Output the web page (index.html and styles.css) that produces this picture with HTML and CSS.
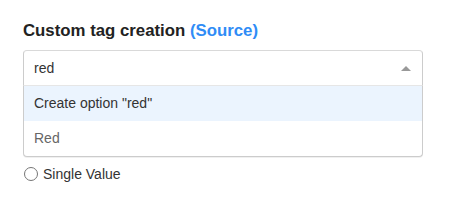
FILE: index.html
```html
<!DOCTYPE html>
<html lang="en">
<head>
    <meta charset="UTF-8">
    <title>Custom tag creation</title>
    <link rel="stylesheet" href="styles.css">
</head>
<body>
    <div class="section">
        <h3 class="section-heading">Custom tag creation <a href="#" class="source-link">(Source)</a></h3>

        <!-- Select (open) -->
        <div class="select is-open">
            <div class="select-control">
                <span class="select-value">red</span>
                <span class="select-arrow"></span>
            </div>
            <div class="select-menu">
                <div class="select-option is-focused">Create option "red"</div>
                <div class="select-option">Red</div>
            </div>
        </div>

        <div class="checkbox-list">
            <label class="radio-label">
                <input type="radio" name="mode" class="radio">
                <span>Single Value</span>
            </label>
        </div>
    </div>
</body>
</html>
```

FILE: styles.css
```css
body {
    margin: 0;
    font-family: "Liberation Sans", Arial, Helvetica, sans-serif;
    font-size: 14px;
    color: #333;
    background-color: #fff;
}

.section {
    padding: 21px 37px 0 23px;
}

.section-heading {
    margin: 0 0 9px;
    font-size: 16.8px;
    line-height: 20px;
    font-weight: bold;
    color: #222;
}

.source-link {
    color: #2f8cf6;
    text-decoration: none;
}

/* Select */
.select {
    position: relative;
}

.select-control {
    display: flex;
    align-items: center;
    height: 34px;
    padding: 0 10px;
    border: 1px solid #ccc;
    border-color: #d9d9d9 #ccc #e6e6e6;
    border-radius: 4px 4px 0 0;
    background-color: #fff;
}

.select-value {
    flex: 1;
    color: #333;
}

.select-arrow {
    width: 0;
    height: 0;
    margin-right: 1px;
    border-style: solid;
    border-width: 0 5px 5px;
    border-color: transparent transparent #999;
}

.select-menu {
    border: 1px solid #ccc;
    border-top: none;
    border-radius: 0 0 4px 4px;
    box-shadow: 0 1px 0 rgba(0, 0, 0, 0.06);
    background-color: #fff;
}

.select-option {
    height: 35px;
    padding: 0 10px;
    line-height: 35px;
    color: #666;
}

.select-option.is-focused {
    background-color: #ebf4fe;
    color: #333;
}

/* Radio */
.checkbox-list {
    margin-top: 9px;
}

.radio-label {
    display: flex;
    align-items: center;
    gap: 5px;
    font-size: 14px;
    color: #333;
}

.radio {
    width: 14px;
    height: 14px;
    margin: 0 0 0 1px;
}
```
